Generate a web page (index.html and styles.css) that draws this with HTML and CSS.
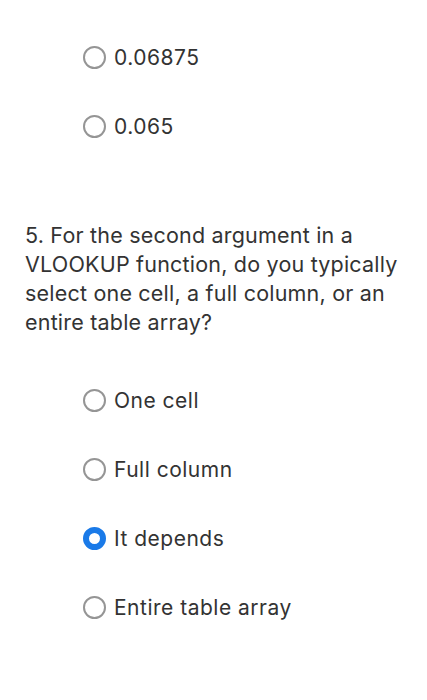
FILE: index.html
```html
<!DOCTYPE html>
<html>
<head>
<meta charset="utf-8">
<link rel="stylesheet" href="styles.css">
</head>
<body>
<div class="page">
  <div class="options options-top">
    <label class="option"><span class="radio"></span><span class="label">0.06875</span></label>
    <label class="option"><span class="radio"></span><span class="label">0.065</span></label>
  </div>
  <p class="question">5. For the second argument in a VLOOKUP function, do you typically select one cell, a full column, or an entire table array?</p>
  <div class="options">
    <label class="option"><span class="radio"></span><span class="label">One cell</span></label>
    <label class="option"><span class="radio"></span><span class="label">Full column</span></label>
    <label class="option"><span class="radio selected"></span><span class="label">It depends</span></label>
    <label class="option"><span class="radio"></span><span class="label">Entire table array</span></label>
  </div>
</div>
</body>
</html>
```
FILE: styles.css
```css
html, body {
  margin: 0;
  padding: 0;
  background: #ffffff;
}
body {
  font-family: Inter, "Liberation Sans", sans-serif;
  color: #333333;
}
.page {
  display: flex;
  flex-direction: column;
  padding-top: 43px;
}
.options {
  display: flex;
  flex-direction: column;
  gap: 40px;
  padding-left: 83px;
}
.option {
  display: flex;
  align-items: center;
  gap: 8px;
  height: 29px;
  font-size: 21px;
  letter-spacing: 0.5px;
}
.radio {
  box-sizing: border-box;
  width: 23px;
  height: 23px;
  border-radius: 50%;
  border: 2px solid #959595;
  background: #fff;
  flex: none;
}
.radio.selected {
  border: 6px solid #1a7ae8;
}
.question {
  margin: 80px 0 49px;
  padding: 0 25px;
  font-size: 21.5px;
  line-height: 29px;
  letter-spacing: 0.2px;
}
```
